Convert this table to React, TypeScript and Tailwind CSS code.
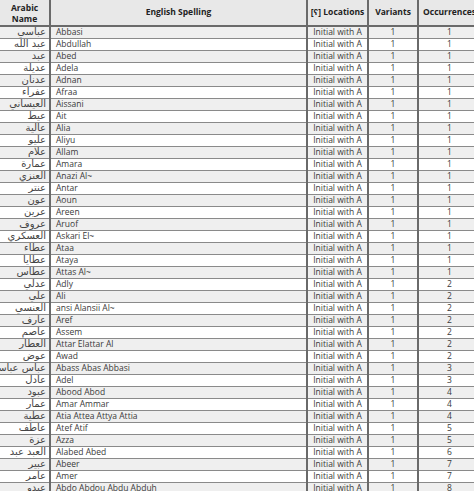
const rows: [string, string, number][] = [
  ["عباسي", "Abbasi", 1],
  ["عبد الله", "Abdullah", 1],
  ["عبد", "Abed", 1],
  ["عديلة", "Adela", 1],
  ["عدنان", "Adnan", 1],
  ["عفراء", "Afraa", 1],
  ["العيساني", "Aissani", 1],
  ["عيط", "Ait", 1],
  ["عالية", "Alia", 1],
  ["عليو", "Aliyu", 1],
  ["علام", "Allam", 1],
  ["عمارة", "Amara", 1],
  ["العنزي", "Anazi Al~", 1],
  ["عنتر", "Antar", 1],
  ["عون", "Aoun", 1],
  ["عرين", "Areen", 1],
  ["عروف", "Aruof", 1],
  ["العسكري", "Askari El~", 1],
  ["عطاء", "Ataa", 1],
  ["عطايا", "Ataya", 1],
  ["عطاس", "Attas Al~", 1],
  ["عدلي", "Adly", 2],
  ["علي", "Ali", 2],
  ["العنسي", "ansi Alansii Al~", 2],
  ["عارف", "Aref", 2],
  ["عاصم", "Assem", 2],
  ["العطار", "Attar Elattar Al", 2],
  ["عوض", "Awad", 2],
  ["عباس عباسي", "Abass Abas Abbasi", 3],
  ["عادل", "Adel", 3],
  ["عبود", "Abood Abod", 4],
  ["عمار", "Amar Ammar", 4],
  ["عطية", "Atia Attea Attya Attia", 4],
  ["عاطف", "Atef Atif", 5],
  ["عزة", "Azza", 5],
  ["العبد عبد", "Alabed Abed", 6],
  ["عبير", "Abeer", 7],
  ["عامر", "Amer", 7],
  ["عبدو", "Abdo Abdou Abdu Abduh", 8],
];

export default function App() {
  return (
    <div className="h-[491px] w-[474px] overflow-hidden bg-white text-[#3a3a3a] [font-family:'Open_Sans',sans-serif]">
      <table className="w-[480px] table-fixed border-collapse text-[8.5px]">
        <colgroup>
          <col className="w-[50px]" />
          <col className="w-[257px]" />
          <col className="w-[61px]" />
          <col className="w-[50px]" />
          <col className="w-[62px]" />
        </colgroup>
        <thead>
          <tr className="h-[26px] bg-[#e8e8e8] font-bold text-[#222]">
            <th className="border-r-2 border-b-2 border-[#6a6a6a] px-0 text-center leading-[11px]">
              Arabic
              <br />
              Name
            </th>
            <th className="border-r-2 border-b-2 border-[#6a6a6a] text-center">English Spelling</th>
            <th className="border-r-2 border-b-2 border-[#6a6a6a] whitespace-nowrap text-center">[ʕ] Locations</th>
            <th className="border-r-2 border-b-2 border-[#6a6a6a] text-center">Variants</th>
            <th className="border-b-2 border-[#6a6a6a] whitespace-nowrap pl-1 text-left">Occurrences</th>
          </tr>
        </thead>
        <tbody>
          {rows.map(([ar, en, occ], i) => (
            <tr key={en} className={`h-[12px] leading-[10px] ${i % 2 === 0 ? "bg-[#efefef]" : "bg-white"}`}>
              <td
                dir="rtl"
                className="border-r-2 border-b border-r-[#6a6a6a] border-b-[#8a8a8a] pr-[3px] text-right whitespace-nowrap text-[10px] leading-[10px] text-[#444] [font-family:'DejaVu_Sans',sans-serif]"
              >
                {ar}
              </td>
              <td className="border-r-2 border-b border-r-[#6a6a6a] border-b-[#8a8a8a] pl-[5px] whitespace-nowrap">{en}</td>
              <td className="border-r-2 border-b border-r-[#6a6a6a] border-b-[#8a8a8a] text-center whitespace-nowrap">Initial with A</td>
              <td className="border-r-2 border-b border-r-[#6a6a6a] border-b-[#8a8a8a] text-center">1</td>
              <td className="border-b border-b-[#8a8a8a] text-center">{occ}</td>
            </tr>
          ))}
        </tbody>
      </table>
    </div>
  );
}
